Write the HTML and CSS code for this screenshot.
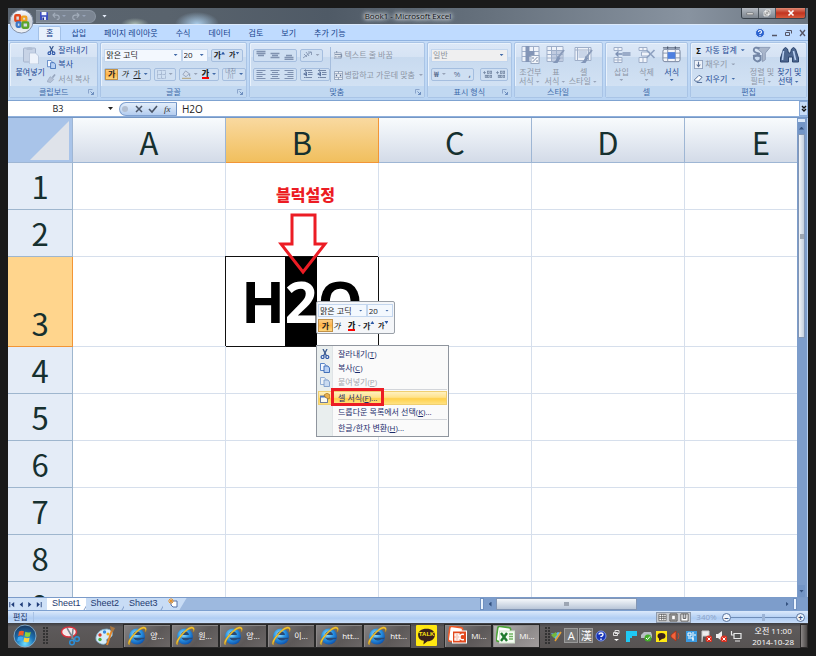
FILE: index.html
```html
<!DOCTYPE html>
<html lang="ko">
<head>
<meta charset="utf-8">
<meta name="viewport" content="width=device-width, initial-scale=1">
<title>Book1 - Microsoft Excel</title>
<link rel="stylesheet" href="styles.css">
</head>
<body>
<svg class="defs" aria-hidden="true">
  <defs>
    <linearGradient id="gOrb" x1="0" y1="0" x2="0" y2="1"><stop offset="0" stop-color="#fdfdff"/><stop offset=".5" stop-color="#c9cfda"/><stop offset="1" stop-color="#f3f6fb"/></linearGradient>
    <radialGradient id="gStart" cx=".5" cy=".85" r=".8"><stop offset="0" stop-color="#6fe0ff"/><stop offset=".5" stop-color="#1d75b8"/><stop offset="1" stop-color="#1a3b63"/></radialGradient>
    <radialGradient id="gIe" cx=".4" cy=".35" r=".7"><stop offset="0" stop-color="#9be2ff"/><stop offset=".5" stop-color="#2b95e4"/><stop offset="1" stop-color="#0a4eaa"/></radialGradient>
  </defs>
  <symbol id="i-save" viewBox="0 0 10 10"><path d="M0 0h9l1 1v9H0z" fill="#3c4ec0"/><path d="M2 0h6v4H2z" fill="#f4f6ff"/><path d="M2.500 6h5v4h-5z" fill="#dfe4f8"/><path d="M3 7h2v3H3z" fill="#26308a"/></symbol>
  <symbol id="i-undo" viewBox="0 0 10 10"><path d="M1 4h5q3 0 3 3T6 9M1 4l3-3M1 4l3 3" fill="none" stroke="#a3adbb" stroke-width="1.500"/></symbol>
  <symbol id="i-redo" viewBox="0 0 10 10"><path d="M9 4H4Q1 4 1 7t3 2M9 4L6 1M9 4L6 7" fill="none" stroke="#a3adbb" stroke-width="1.500"/></symbol>
  <symbol id="i-office" viewBox="0 0 26 26"><circle cx="13" cy="13" r="12" fill="url(#gOrb)" stroke="#7f8ea6"/><g fill="none" stroke-width="2.400"><rect x="6.500" y="6.500" width="5" height="6" rx="1" stroke="#e0481c"/><rect x="13.500" y="8" width="4.500" height="4.500" rx="1" stroke="#f0a020"/><rect x="8" y="14" width="4" height="4.500" rx="1" stroke="#3c78c8"/><rect x="14" y="14" width="6" height="5.500" rx="1" stroke="#5ba52c"/></g></symbol>
  <symbol id="i-paste" viewBox="0 0 16 18"><rect x="1" y="2" width="12" height="14" rx="1" fill="#c7d3e6" stroke="#a5b4cc"/><path d="M4 3q0-2 3-2t3 2v1H4z" fill="#b1bfd4"/><path d="M7 7h6l3 3v8H7z" fill="#eef3fb" stroke="#b3c1d8" stroke-width=".8"/></symbol>
  <symbol id="i-cut" viewBox="0 0 10 10"><path d="M3 0l3.500 7M7 0L3.500 7" stroke="#39598f" stroke-width="1.300"/><circle cx="2.600" cy="8" r="1.500" fill="none" stroke="#2c56a8" stroke-width="1.200"/><circle cx="7.300" cy="8" r="1.500" fill="none" stroke="#2c56a8" stroke-width="1.200"/></symbol>
  <symbol id="i-copy" viewBox="0 0 10 10"><path d="M.5.500h4l1.500 2v5H.5z" fill="#f2f7ff" stroke="#4a78bf" stroke-width=".9"/><path d="M4 3h4l1.500 2v4.500H4z" fill="#b7d0f4" stroke="#3465b2" stroke-width=".9"/></symbol>
  <symbol id="i-brush" viewBox="0 0 10 10"><path d="M9 .5L6 4" stroke="#96a5bd" stroke-width="1.800"/><path d="M3.500 3l4 3L4 9.500 0 8.500z" fill="#b5c2d6" stroke="#92a2bc" stroke-width=".7"/></symbol>
  <symbol id="i-border" viewBox="0 0 10 10"><path d="M.5.500h9v9h-9zM5 .5v9M.5 5h9" fill="none" stroke="#9aabc7" stroke-dasharray="1 .5"/></symbol>
  <symbol id="i-fill" viewBox="0 0 10 10"><path d="M4 1l4 3-3.500 3.500L1 5z" fill="#d5deeb" stroke="#8493ad" stroke-width=".8"/><path d="M8.500 4v3" stroke="#8493ad"/><path d="M0 8.500h10V10H0z" fill="#b9ad8e"/></symbol>
  <symbol id="i-top" viewBox="0 0 10 10"><path d="M.5 1.500h9M.5 3.500h9M2 5.500h6" stroke="#8092b0" stroke-width="1.500"/></symbol>
  <symbol id="i-mid" viewBox="0 0 10 10"><path d="M.5 3.500h9M2 5.500h6M.5 7.500h9" stroke="#8092b0" stroke-width="1.500"/></symbol>
  <symbol id="i-bot" viewBox="0 0 10 10"><path d="M2 5.500h6M.5 7.500h9M.5 9.500h9" stroke="#8092b0" stroke-width="1.500"/></symbol>
  <symbol id="i-left" viewBox="0 0 10 10"><path d="M.5 1.500h9M.5 3.500h6M.5 5.500h9M.5 7.500h6M.5 9.500h9" stroke="#7e90af"/></symbol>
  <symbol id="i-cen" viewBox="0 0 10 10"><path d="M.5 1.500h9M2 3.500h6M.5 5.500h9M2 7.500h6M.5 9.500h9" stroke="#7e90af"/></symbol>
  <symbol id="i-right" viewBox="0 0 10 10"><path d="M.5 1.500h9M3.500 3.500h6M.5 5.500h9M3.500 7.500h6M.5 9.500h9" stroke="#7e90af"/></symbol>
  <symbol id="i-ind" viewBox="0 0 10 10"><path d="M1 1.500h8M5 3.500h4.500M5 5.500h4.500M1 8.500h8" stroke="#7487a8"/><path d="M4 2.500v5L0 5z" fill="#5f76a0"/><path d="M2.500 0v10" stroke="#93a5c2" stroke-dasharray="1 1"/></symbol>
  <symbol id="i-ori" viewBox="0 0 10 10"><path d="M0 8l8-6M5 2h3.500v3M1 4l3 3M3 2l3 4" fill="none" stroke="#8b9cb8"/></symbol>
  <symbol id="i-wrap" viewBox="0 0 10 10"><path d="M0 2h8v6H0z" fill="#edf1f7" stroke="#8899b4" stroke-width=".9"/><path d="M1 4h7.500v2.500H4M1 6.500h2M3 0v2" fill="none" stroke="#71839f"/></symbol>
  <symbol id="i-merge" viewBox="0 0 10 10"><path d="M.5.500h9v9h-9zM.5 3h9M.5 7h9M5 0v3M5 7v3" fill="#edf1f7" stroke="#8899b4" stroke-width=".9"/><path d="M2 5h1.500M6.500 5H8" stroke="#4d648d" stroke-width="1.400"/></symbol>
  <symbol id="i-dec" viewBox="0 0 12 10"><path d="M0 2.500h4M2 .5v4" stroke="#70839f"/><g fill="none" stroke="#70839f"><rect x="6" y=".5" width="2" height="3"/><rect x="9.500" y=".5" width="2" height="3"/><rect x="3" y="6" width="2" height="3"/><rect x="6" y="6" width="2" height="3"/><rect x="9.500" y="6" width="2" height="3"/></g></symbol>
  <symbol id="i-cond" viewBox="0 0 18 18"><path d="M.5.500h17v15H.5zM.5 5.500h17M.5 10.500h17M12 .5v15" fill="#eff3fa" stroke="#9fafc9"/><path d="M4 0h4v16H4zM8 5h5v5H8z" fill="#8395b6"/><rect x="9.500" y="9.500" width="8" height="8" fill="#f5f7fb" stroke="#97a7c0"/><path d="M11 16l5-5M11.500 11v2M15.500 14v2" stroke="#7788a6"/></symbol>
  <symbol id="i-table" viewBox="0 0 18 18"><path d="M.5.500h16v15H.5zM.5 4.500h16M.5 8.500h16M.5 12h16M5 .5v15M10 .5v15" fill="#eff3fa" stroke="#9fafc9"/><path d="M5 5h11v10H5z" fill="#a2b3d0" opacity=".6"/><path d="M17.500 4L12 11" stroke="#8b9cba" stroke-width="2"/><path d="M11 10l3 2-3 5H6q4-2 5-7z" fill="#8296b8"/></symbol>
  <symbol id="i-style" viewBox="0 0 18 18"><path d="M.5 1.500h16v13H.5zM.5 4h16M3 1.500v13M14 1.500v13" fill="#eff3fa" stroke="#9fafc9"/><path d="M4 5h9v7H4z" fill="#c9d5e8"/><path d="M17.500 4L12 11" stroke="#8b9cba" stroke-width="2"/><path d="M11 10l3 2-3 5H6q4-2 5-7z" fill="#8296b8"/></symbol>
  <symbol id="i-ins" viewBox="0 0 18 18"><path d="M1.500 1.500h8v3h-8zM5.500 1.500v3M1.500 11.500h8v5h-8zM5.500 11.500v5M1.500 14h8" fill="#f1f4fa" stroke="#9fafc9"/><path d="M10 6h8v4h-8z" fill="#9aabc8"/><path d="M10 8H4M6 5.500L3.500 8 6 10.500" fill="none" stroke="#7b8fb2" stroke-width="1.300"/></symbol>
  <symbol id="i-del" viewBox="0 0 18 18"><path d="M1.500 1.500h8v3h-8zM5.500 1.500v3M4 6h8v4H4zM1.500 11.500h8v5h-8zM5.500 11.500v5" fill="#f1f4fa" stroke="#9fafc9"/><path d="M9 4l8 8M17 4l-8 8" stroke="#8fa2c1" stroke-width="1.700"/></symbol>
  <symbol id="i-fmt" viewBox="0 0 20 18"><path d="M1 1.500h18M6 0v3M14 0v3" stroke="#3c4a63"/><rect x="1" y="3" width="18" height="13" rx="2" fill="#f4f6fa" stroke="#72819b"/><path d="M1 7h18M1 12h18M6 3v13M14 3v13" stroke="#8b98ae"/><rect x="6" y="6" width="8" height="7" fill="#4e80e0"/></symbol>
  <symbol id="i-down" viewBox="0 0 10 10"><rect x=".5" y=".5" width="9" height="9" fill="#eef2f9" stroke="#8fa0bd"/><path d="M5 2v5M3 5l2 2.500L7 5" fill="none" stroke="#5f7397" stroke-width="1.200"/></symbol>
  <symbol id="i-erase" viewBox="0 0 10 10"><path d="M5.500 1.500L9 3.500 5 8H1.500L.5 6.500z" fill="#fff" stroke="#43618f"/><path d="M3 9.500h6" stroke="#43618f"/></symbol>
  <symbol id="i-sort" viewBox="0 0 20 18"><path d="M4 1h15l-5 6v7l-3 2V7z" fill="#a9b6cb" stroke="#8c9bb5"/><path d="M8 2q-5-2-6 1t4 4-5 3M8 10q-7-1-6 3 3 5 7 1v-4z" fill="none" stroke="#7386a6" stroke-width="2"/></symbol>
  <symbol id="i-find" viewBox="0 0 18 18"><path d="M3 3q2-3 4 0l1 4h2l1-4q2-3 4 0l3 9v4h-6v-5h-4v5H0v-4z" fill="#4c668f" stroke="#2c456e"/><path d="M3 5l-1 9M13 5l2 9" stroke="#b9cff0" stroke-width="1.600"/></symbol>
  <symbol id="i-help" viewBox="0 0 10 10"><circle cx="5" cy="5" r="4.500" fill="#2b63d0" stroke="#c6dcfa"/><path d="M3.500 4q0-1.500 1.500-1.500T6.500 4Q6.500 5 5 5.500V6M5 7v1" fill="none" stroke="#fff" stroke-width="1.100"/></symbol>
  <symbol id="i-launch" viewBox="0 0 6 6"><path d="M.5 4.500v-4h4" fill="none" stroke="#8ba5cc"/><path d="M2.500 2.500l3 3M5.500 3v2.500H3" fill="none" stroke="#6d8ebf"/></symbol>
  <symbol id="i-prop" viewBox="0 0 10 10"><rect x=".5" y="3" width="7" height="6.500" fill="#fdfbf0" stroke="#5f719a" stroke-width=".9"/><path d="M0 3h8v1.500H0z" fill="#4e79c3"/><path d="M4 2l3-2 3 2v3L8 6 5 4z" fill="#eab04c" stroke="#8a6220" stroke-width=".6"/></symbol>
  <symbol id="i-ie" viewBox="0 0 20 20"><circle cx="10" cy="10.500" r="8" fill="url(#gIe)"/><path d="M6 9q.5-3.500 4-3.500T14 9zM6 11.700h12q-1 2-3.500 1.600-5 3-8.500-1.600z" fill="#274a78"/><path d="M2.500 19q-4-2 4-11T18 1q2.500 1 .5 5 .5-3-1.500-3.500-4 0-9.500 6.500T2.500 19z" fill="#f6c832" stroke="#c98f10" stroke-width=".4"/></symbol>
  <symbol id="i-start" viewBox="0 0 24 24"><circle cx="12" cy="12" r="11" fill="url(#gStart)" stroke="#8db9d8" stroke-width=".8"/><path d="M6 7.500q3-1.500 5-.2l-.8 4.500q-2.400-1-5 .2z" fill="#f05a28"/><path d="M12.300 7.700q2.500 1.300 5.500.2l-1 4.600q-2.700 1-5.200-.3z" fill="#8fd03c"/><path d="M5 13.200q2.500-1.300 5-.1L9.200 17q-2.200-1-5 .2z" fill="#3fa9f5"/><path d="M11.300 13.500q2.500 1.200 5.300.2l-1 4.200q-2.600.8-5.100-.4z" fill="#ffd23c"/></symbol>
  <symbol id="i-snip" viewBox="0 0 20 20"><ellipse cx="8" cy="6" rx="7.500" ry="5" fill="#f5e9ea" stroke="#d8323e" stroke-width="1.500"/><path d="M6 2l7 12M12 3l-1 10" stroke="#7d8791" stroke-width="1.500"/><circle cx="11" cy="16.500" r="2.300" fill="none" stroke="#2c8fd8" stroke-width="1.500"/><circle cx="16" cy="13" r="2.300" fill="none" stroke="#2c8fd8" stroke-width="1.500"/></symbol>
  <symbol id="i-paint" viewBox="0 0 20 20"><path d="M1 11q2-8 11-8 7 1 5 7-2 3-5 3-1 1 0 3-2 4-8 1-4-2-3-6z" fill="#d8ecf8" stroke="#7fb1cf" stroke-width=".8"/><circle cx="5" cy="9" r="1.700" fill="#d83a2c"/><circle cx="9.500" cy="6" r="1.700" fill="#3a8be0"/><circle cx="5" cy="13.500" r="1.700" fill="#4caf3e"/><circle cx="13" cy="8" r="1.500" fill="#f2b01e"/><path d="M17 4l-5 15" stroke="#e0832a" stroke-width="2"/><path d="M15 0l5 2-2 4-2-1z" fill="#a87742"/></symbol>
  <symbol id="i-ppt" viewBox="0 0 20 20"><rect x="1" y="1" width="13" height="15" rx="2" fill="#fff" stroke="#f05a28" stroke-width="1.600" transform="rotate(8 8 8)"/><rect x="4.500" y="5" width="14" height="12" fill="#e2481c" stroke="#fff"/><path d="M7 8h4v2H7zM7 12h4v2H7zM16 8.500q-4-1-4 2.500t4 2.500" fill="none" stroke="#fff" stroke-width="1.400"/></symbol>
  <symbol id="i-xls" viewBox="0 0 20 20"><rect x="1" y="1" width="13" height="15" rx="2" fill="#fff" stroke="#4ea63a" stroke-width="1.600" transform="rotate(8 8 8)"/><rect x="3.500" y="5" width="15" height="12" fill="#f4fbf2" stroke="#d3e6cf"/><path d="M5 7l6 8M11 7l-6 8" stroke="#1f7a2e" stroke-width="2.400"/><path d="M13 8h4M13 10.500h4M13 13h4" stroke="#6fb562" stroke-width="1.300"/></symbol>
  <symbol id="i-talk" viewBox="0 0 20 20"><rect width="20" height="20" rx="1" fill="#ffe812"/><path d="M10 3.500c5 0 8 2.500 8 6s-3 6-7 6l-4 3 .5-3.400C4 14.500 2 12.500 2 9.500c0-3.500 3-6 8-6z" fill="#38201c"/></symbol>
</svg>

<div class="window">
  <header class="titlebar">
    <button class="orb" aria-label="Office 단추"><svg><use href="#i-office"/></svg></button>
    <div class="quick">
      <button aria-label="저장"><svg><use href="#i-save"/></svg></button>
      <button aria-label="실행 취소"><svg><use href="#i-undo"/></svg><i class="dd light"></i></button>
      <button aria-label="다시 실행"><svg><use href="#i-redo"/></svg><i class="dd light"></i></button>
    </div>
    <i class="dd white"></i>
    <h1>Book1 - Microsoft Excel</h1>
    <div class="winbtns">
      <button aria-label="최소화"><svg viewBox="0 0 12 10"><path d="M2 5h8v2H2z" fill="#fff" stroke="#444" stroke-width=".6"/></svg></button>
      <button aria-label="최대화"><svg viewBox="0 0 12 10"><path d="M4.500 1.500h5v5h-5zM2.500 3.500h5v5h-5z" fill="#777" stroke="#fff"/></svg></button>
      <button class="close" aria-label="닫기"><svg viewBox="0 0 12 10"><path d="M3 2l6 6M9 2L3 8" stroke="#fff" stroke-width="2"/></svg></button>
    </div>
  </header>

  <nav class="tabs">
    <a class="on" href="#home">홈</a><a href="#insert">삽입</a><a href="#layout">페이지 레이아웃</a><a href="#formula">수식</a><a href="#data">데이터</a><a href="#review">검토</a><a href="#view">보기</a><a href="#addin">추가 기능</a>
    <div class="docbtns">
      <button aria-label="도움말"><svg><use href="#i-help"/></svg></button>
      <button aria-label="문서 최소화"><svg viewBox="0 0 10 10"><path d="M3 7.500h5" stroke="#556" stroke-width="1.500"/></svg></button>
      <button aria-label="문서 복원"><svg viewBox="0 0 10 10"><path d="M3.500 2.500h5v3M2.500 4.500h4v3h-4z" fill="none" stroke="#556"/></svg></button>
      <button aria-label="문서 닫기"><svg viewBox="0 0 10 10"><path d="M3 2l5 6M8 2L3 8" stroke="#556" stroke-width="1.300"/></svg></button>
    </div>
  </nav>

  <div class="ribbon">
    <section class="group clip">
      <div class="body">
        <button class="big"><svg><use href="#i-paste"/></svg><span>붙여넣기</span><i class="dd"></i></button>
        <div class="list">
          <button><svg><use href="#i-cut"/></svg>잘라내기</button>
          <button><svg><use href="#i-copy"/></svg>복사</button>
          <button class="off"><svg><use href="#i-brush"/></svg>서식 복사</button>
        </div>
      </div>
      <h2>클립보드<svg><use href="#i-launch"/></svg></h2>
    </section>
    <section class="group font">
      <div class="body rows">
        <div class="row">
          <span class="combo face"><select aria-label="글꼴"><option>맑은 고딕</option></select><i class="dd"></i></span>
          <span class="combo size"><select aria-label="글꼴 크기"><option>20</option></select><i class="dd"></i></span>
          <span class="set end"><button class="ga">가<i class="tip grow"></i></button><button class="ga small">가<i class="tip"></i></button></span>
        </div>
        <div class="row">
          <span class="set"><button class="ga hot">가</button><button class="ga it">가</button><button class="ga un">가<i class="dd"></i></button></span>
          <span class="set"><button class="off"><svg><use href="#i-border"/></svg><i class="dd"></i></button></span>
          <span class="set"><button class="off"><svg><use href="#i-fill"/></svg><i class="dd"></i></button><button class="ga"><b class="red">가</b><i class="dd"></i></button></span>
          <span class="set end"><button class="ruby"><span>내천<br>川</span><i class="dd"></i></button></span>
        </div>
      </div>
      <h2>글꼴<svg><use href="#i-launch"/></svg></h2>
    </section>
    <section class="group align">
      <div class="body">
        <div class="rows">
          <div class="row">
            <span class="set"><button aria-label="위쪽 맞춤"><svg><use href="#i-top"/></svg></button><button aria-label="가운데 맞춤"><svg><use href="#i-mid"/></svg></button><button aria-label="아래쪽 맞춤"><svg><use href="#i-bot"/></svg></button></span>
            <span class="set"><button class="off" aria-label="방향"><svg><use href="#i-ori"/></svg><i class="dd"></i></button></span>
          </div>
          <div class="row">
            <span class="set"><button aria-label="왼쪽"><svg><use href="#i-left"/></svg></button><button aria-label="가운데"><svg><use href="#i-cen"/></svg></button><button aria-label="오른쪽"><svg><use href="#i-right"/></svg></button></span>
            <span class="set"><button aria-label="내어쓰기"><svg><use href="#i-ind"/></svg></button><button aria-label="들여쓰기"><svg><use href="#i-ind"/></svg></button></span>
          </div>
        </div>
        <div class="list two">
          <button class="off"><svg><use href="#i-wrap"/></svg>텍스트 줄 바꿈</button>
          <button class="off"><svg><use href="#i-merge"/></svg>병합하고 가운데 맞춤<i class="dd"></i></button>
        </div>
      </div>
      <h2>맞춤<svg><use href="#i-launch"/></svg></h2>
    </section>
    <section class="group number">
      <div class="body rows">
        <div class="row"><span class="combo grey"><select aria-label="표시 형식" disabled><option>일반</option></select><i class="dd"></i></span></div>
        <div class="row">
          <span class="set sym"><button><b>₩</b><i class="dd light"></i></button><button>%</button><button><b>,</b></button></span>
          <span class="set end"><button aria-label="자릿수 늘림"><svg><use href="#i-dec"/></svg></button><button aria-label="자릿수 줄임"><svg><use href="#i-dec"/></svg></button></span>
        </div>
      </div>
      <h2>표시 형식<svg><use href="#i-launch"/></svg></h2>
    </section>
    <section class="group styles">
      <div class="body">
        <button class="big off"><svg><use href="#i-cond"/></svg><span>조건부<br>서식<i class="dd"></i></span></button>
        <button class="big off"><svg><use href="#i-table"/></svg><span>표<br>서식<i class="dd"></i></span></button>
        <button class="big off"><svg><use href="#i-style"/></svg><span>셀<br>스타일<i class="dd"></i></span></button>
      </div>
      <h2>스타일</h2>
    </section>
    <section class="group cells">
      <div class="body">
        <button class="big off"><svg><use href="#i-ins"/></svg><span>삽입</span><i class="dd"></i></button>
        <button class="big off"><svg><use href="#i-del"/></svg><span>삭제</span><i class="dd"></i></button>
        <button class="big"><svg><use href="#i-fmt"/></svg><span>서식</span><i class="dd"></i></button>
      </div>
      <h2>셀</h2>
    </section>
    <section class="group edit">
      <div class="body">
        <div class="list">
          <button><b class="sigma">Σ</b>자동 합계<i class="dd"></i></button>
          <button class="off"><svg><use href="#i-down"/></svg>채우기<i class="dd"></i></button>
          <button><svg><use href="#i-erase"/></svg>지우기<i class="dd"></i></button>
        </div>
        <button class="big off"><svg><use href="#i-sort"/></svg><span>정렬 및<br>필터<i class="dd"></i></span></button>
        <button class="big"><svg><use href="#i-find"/></svg><span>찾기 및<br>선택<i class="dd"></i></span></button>
      </div>
      <h2>편집</h2>
    </section>
  </div>

  <div class="formula">
    <input class="name" aria-label="이름 상자" value="B3">
    <i class="dd black"></i>
    <div class="fx">
      <i class="knob"></i>
      <button aria-label="취소"><svg viewBox="0 0 10 10"><path d="M2 2l6 6M8 2L2 8" stroke="#4a5568" stroke-width="1.500"/></svg></button>
      <button aria-label="입력"><svg viewBox="0 0 10 10"><path d="M1 5l3 3 5-6" fill="none" stroke="#4a5568" stroke-width="1.600"/></svg></button>
      <button class="fn">fx</button>
    </div>
    <input class="value" aria-label="수식 입력줄" value="H2O">
    <button class="expand" aria-label="수식 입력줄 확장"><svg viewBox="0 0 8 10"><path d="M2 2l2 2 2-2M2 5l2 2 2-2" fill="none" stroke="#111" stroke-width="1.400"/></svg></button>
  </div>

  <main class="sheet">
    <div class="view">
      <table>
        <colgroup><col class="rh"><col><col><col><col><col></colgroup>
        <thead><tr><th class="corner"><svg viewBox="0 0 64 44"><path d="M61 3v39H22z" fill="#dfe3ea"/></svg></th><th>A</th><th class="sel">B</th><th>C</th><th>D</th><th>E</th></tr></thead>
        <tbody>
          <tr><th>1</th><td></td><td></td><td></td><td></td><td></td></tr>
          <tr><th>2</th><td></td><td></td><td></td><td></td><td></td></tr>
          <tr class="tall"><th class="sel">3</th><td></td><td class="active"><div>H<mark>2</mark>O</div></td><td></td><td></td><td></td></tr>
          <tr><th>4</th><td></td><td></td><td></td><td></td><td></td></tr>
          <tr><th>5</th><td></td><td></td><td></td><td></td><td></td></tr>
          <tr><th>6</th><td></td><td></td><td></td><td></td><td></td></tr>
          <tr><th>7</th><td></td><td></td><td></td><td></td><td></td></tr>
          <tr><th>8</th><td></td><td></td><td></td><td></td><td></td></tr>
          <tr><th>9</th><td></td><td></td><td></td><td></td><td></td></tr>
        </tbody>
      </table>
    </div>
    <div class="vbar"><i class="split"></i><button class="up" aria-label="위로"></button><i class="thumb"></i><button class="down" aria-label="아래로"></button></div>

    <p class="note">블럭설정</p>
    <svg class="arrow" viewBox="0 0 50 62"><path d="M14 2h23v29h10L25 59 3 31h11z" fill="none" stroke="#ec1c24" stroke-width="3"/></svg>

    <div class="mini">
      <div class="row">
        <span class="combo face"><select aria-label="미니 글꼴"><option>맑은 고딕</option></select><i class="dd"></i></span>
        <span class="combo size"><select aria-label="미니 글꼴 크기"><option>20</option></select><i class="dd"></i></span>
      </div>
      <div class="row">
        <button class="ga hot">가</button><button class="ga it">가</button><button class="ga"><b class="red">가</b><i class="dd"></i></button><button class="ga">가<i class="tip grow"></i></button><button class="ga small">가<i class="tip"></i></button>
      </div>
    </div>

    <div class="menu">
      <button><svg><use href="#i-cut"/></svg><span>잘라내기(<u>T</u>)</span></button>
      <button><svg><use href="#i-copy"/></svg><span>복사(<u>C</u>)</span></button>
      <button class="off"><svg><use href="#i-copy"/></svg><span>붙여넣기(<u>P</u>)</span></button>
      <hr>
      <button class="hover"><svg><use href="#i-prop"/></svg><span>셀 서식(<u>F</u>)...</span></button>
      <button><svg></svg><span>드롭다운 목록에서 선택(<u>K</u>)...</span></button>
      <hr>
      <button><svg></svg><span>한글/한자 변환(<u>H</u>)...</span></button>
      <i class="frame"></i>
    </div>
  </main>

  <div class="sheettabs">
    <div class="nav">
      <button aria-label="처음"><svg viewBox="0 0 8 8"><path d="M1 1h1v6H1zM6.500 1v6L3 4z"/></svg></button>
      <button aria-label="이전"><svg viewBox="0 0 8 8"><path d="M6 1v6L2.500 4z"/></svg></button>
      <button aria-label="다음"><svg viewBox="0 0 8 8"><path d="M2 1v6l3.500-3z"/></svg></button>
      <button aria-label="마지막"><svg viewBox="0 0 8 8"><path d="M6 1h1v6H6zM1.500 1v6L5 4z"/></svg></button>
    </div>
    <a class="on" href="#s1">Sheet1</a><a href="#s2">Sheet2</a><a href="#s3">Sheet3</a><a class="new" href="#new" aria-label="워크시트 삽입"><svg viewBox="0 0 10 10"><path d="M3 3h6v6H5L3 7z" fill="#fff" stroke="#5571a5"/><path d="M3 0v6M0 3h6M1 1l4 4M5 1L1 5" stroke="#e8942c"/></svg></a>
    <div class="hbar"><i class="split"></i><button class="lt" aria-label="왼쪽으로"></button><i class="thumb"></i><i class="track"></i><button class="rt" aria-label="오른쪽으로"></button><i class="split"></i></div>
  </div>

  <footer class="status">
    <span class="mode">편집</span>
    <div class="views">
      <button aria-label="기본"><svg viewBox="0 0 10 10"><path d="M1 1.500h8v7H1zM1 4h8M1 6h8M4 1v7M6.500 1v7" fill="#fff" stroke="#555" stroke-width=".8"/></svg></button>
      <button aria-label="페이지 레이아웃 보기"><svg viewBox="0 0 10 10"><path d="M1 1h8v8H1z" fill="#aaa" stroke="#555"/><path d="M3 2.500h4v5H3z" fill="#fff" stroke="#555" stroke-width=".7"/></svg></button>
      <button aria-label="페이지 나누기 미리 보기"><svg viewBox="0 0 10 10"><path d="M1 1h8v8H1zM3.500 1v5h3V1" fill="#fff" stroke="#555"/></svg></button>
    </div>
    <span class="pct">340%</span>
    <button class="round" aria-label="축소">−</button>
    <input type="range" aria-label="확대/축소" min="0" max="100" value="50">
    <button class="round" aria-label="확대">+</button>
  </footer>
</div>

<div class="taskbar">
  <button class="start" aria-label="시작"><svg><use href="#i-start"/></svg></button>
  <i class="grip"></i>
  <button class="pin" aria-label="캡처 도구"><svg><use href="#i-snip"/></svg></button>
  <button class="pin" aria-label="그림판"><svg><use href="#i-paint"/></svg></button>
  <div class="tasks">
    <button><svg><use href="#i-ie"/></svg>양...</button>
    <button><svg><use href="#i-ie"/></svg>원...</button>
    <button><svg><use href="#i-ie"/></svg>양...</button>
    <button><svg><use href="#i-ie"/></svg>이...</button>
    <button><svg><use href="#i-ie"/></svg>htt...</button>
    <button><svg><use href="#i-ie"/></svg>htt...</button>
  </div>
  <button class="talk" aria-label="카카오톡"><svg><use href="#i-talk"/></svg><span>TALK</span></button>
  <div class="tasks"><button><svg><use href="#i-ppt"/></svg>Mi...</button></div>
  <div class="tasks last"><button class="now"><svg><use href="#i-xls"/></svg>Mi...</button></div>
  <i class="grip"></i>
  <div class="tray">
    <svg viewBox="0 0 12 12"><path d="M1 3l5 7 5-7-3-1-3 2z" fill="#5fb8e8"/><path d="M1 5l5-3 1 3-3 3z" fill="#74b83c"/><path d="M5 11l6-9" stroke="#e8a030" stroke-width="1.500"/></svg>
    <span class="ime">A</span><span class="ime">漢</span>
    <svg viewBox="0 0 12 12"><circle cx="6" cy="6" r="5" fill="#1734b8" stroke="#7d96e8"/><path d="M4 4.500Q4 3 6 3t2 1.700Q8 6 6 6.500V7M6 8.500V10" fill="none" stroke="#fff" stroke-width="1.300"/></svg>
    <svg viewBox="0 0 12 12"><path d="M5 .5h4v3H5zM3.500 2.500h4v3h-4z" fill="none" stroke="#ddd"/><path d="M4 9h5L6.500 11z" fill="#fff"/></svg>
    <svg viewBox="0 0 12 12"><path d="M1 1h11v5H7v2H5v4H1z" fill="#1fc8f4"/></svg>
    <svg viewBox="0 0 12 12"><path d="M1 5l3-3h7l1 3v3H1z" fill="#b8bdc4"/><circle cx="8" cy="8" r="3.500" fill="#43b02a"/><path d="M6 8l1.500 1.500L10 6.500" fill="none" stroke="#fff"/></svg>
    <svg viewBox="0 0 12 12"><path d="M1 1h11v11H1z" fill="#ffe812"/><ellipse cx="6.500" cy="6" rx="4" ry="3" fill="#38201c"/><path d="M4 7l0 4 3-2z" fill="#38201c"/></svg>
    <svg viewBox="0 0 12 12"><path d="M1 5l5-4v10L1 7z" fill="#f2643c" stroke="#a82d14" stroke-width=".8"/><path d="M8 3q2 3 0 6" fill="none" stroke="#c94a2c"/></svg>
    <svg viewBox="0 0 12 12"><path d="M1 1h11v11H1z" fill="#3a9ae0"/><path d="M3 3h3v3H3zM8 2v8M9 5h2M3 8h5v3" fill="none" stroke="#fff"/></svg>
    <svg viewBox="0 0 12 12"><path d="M2 12V1h7v5H3" fill="#eee" stroke="#ccc"/><circle cx="9" cy="9" r="3.500" fill="#dc3020"/><path d="M7.500 7.500l3 3M10.500 7.500l-3 3" stroke="#fff"/></svg>
    <svg viewBox="0 0 12 12"><path d="M1 4h2l4-3v10L3 8H1z" fill="#eee"/><circle cx="9" cy="9" r="3.500" fill="#dc3020"/><path d="M7.500 7.500l3 3M10.500 7.500l-3 3" stroke="#fff"/></svg>
    <svg viewBox="0 0 12 12"><path d="M4 3.500h7v5H4zM5 11h5M1.500 1v4h2" fill="#555" stroke="#e6e6e6" stroke-width="1.200"/></svg>
  </div>
  <div class="clock">오전 11:00<br>2014-10-28</div>
  <i class="peek"></i>
</div>
</body>
</html>
```

FILE: styles.css
```css
* { box-sizing: border-box; margin: 0; padding: 0; }
body {
  min-height: 100vh;
  padding: 8px;
  background: #1a1a1a;
  display: flex;
  flex-direction: column;
  font: 8px/10px "Open Sans", "Noto Sans CJK KR", sans-serif;
  color: #1e4a94;
}
button, input, select { font: inherit; color: inherit; border: 0; background: none; appearance: none; }
button { display: flex; align-items: center; white-space: nowrap; }
a { color: inherit; text-decoration: none; }
svg { display: block; flex: none; width: 10px; height: 10px; }
.defs { position: absolute; width: 0; height: 0; }
.window { flex: 1; display: flex; flex-direction: column; min-height: 0; }

.dd { flex: none; width: 4px; height: 2px; margin: 0 2px; background: #416aa8; clip-path: polygon(0 0, 100% 0, 50% 100%); }
.dd.light, .off .dd { background: #97a3b8; }
.dd.white { background: #e6eefa; width: 5px; height: 3px; margin: 0 6px; }
.dd.black { background: #222; width: 5px; height: 3px; margin: 0 6px 0 0; }

/* title bar */
.titlebar {
  position: relative;
  height: 16px;
  display: flex;
  align-items: center;
  background:
    radial-gradient(ellipse 22px 12px at 189px 16px, #a9cbe8, transparent),
    radial-gradient(ellipse 14px 6px at 127px 16px, #a9b8b0, transparent),
    linear-gradient(90deg, #5a646f 0, #59636d 20%, #4f5a66 40%, #66717d 60%, #8893a0 85%, #6a7480 100%);
}
.orb { position: absolute; left: 1px; top: 1px; z-index: 2; }
.orb svg { width: 25px; height: 25px; }
.quick { margin-left: 28px; width: 60px; height: 13px; display: flex; align-items: center; gap: 4px; padding-left: 4px; border: 1px solid #8c96a3; border-left: 0; border-radius: 0 7px 7px 0; background: #7b8592; }
.quick svg { width: 8px; height: 8px; }
.titlebar h1 { position: absolute; inset: 0; text-align: center; font: 8px/16px "Open Sans", sans-serif; color: #111; text-shadow: 0 0 3px #dfe5ea, 0 0 4px #dfe5ea, 0 0 5px #dfe5ea, 0 0 6px #dfe5ea; }
.winbtns { margin: 0 2px 5px auto; position: relative; z-index: 1; display: flex; border: 1px solid #39414b; border-top: 0; border-radius: 0 0 3px 3px; overflow: hidden; }
.winbtns button { width: 17px; height: 10px; justify-content: center; background: linear-gradient(#b4bac2, #7d858f); border-right: 1px solid #4d565f; }
.winbtns .close { width: 29px; border: 0; background: linear-gradient(#e08a74, #c23420 50%, #d65a3c); }

/* ribbon tabs */
.tabs { height: 16px; display: flex; align-items: end; padding-left: 30px; background: #bfdbff; border-top: 1px solid #dbe9fb; }
.tabs a { height: 14px; line-height: 14px; padding: 0 9px; color: #15428b; }
.tabs a.on { padding: 0 7px; margin-right: 1px; background: #e8f1fc; border: 1px solid #a3c1e8; border-bottom: 0; border-radius: 2px 2px 0 0; line-height: 12px; }
.docbtns { margin-left: auto; display: flex; gap: 4px; align-self: center; padding-right: 1px; }

/* ribbon */
.ribbon { height: 61px; display: flex; gap: 2px; padding: 1px 1px 2px; background: linear-gradient(#c5dcf7, #b9d4f3); border-top: 1px solid #8fb2e0; border-bottom: 1px solid #7fa3d1; }
.group { min-width: 0; display: flex; flex-direction: column; border: 1px solid #a9c4e6; border-radius: 2px; background: linear-gradient(#dce8f7 0, #d6e3f4 25%, #c8daef 26%, #d5e4f5 100%); box-shadow: inset 1px 1px #e9f2fc; overflow: hidden; }
.group h2 { position: relative; flex: none; height: 11px; font-weight: 400; font-size: 8px; line-height: 11px; text-align: center; background: #c1d8f1; color: #3e6aaa; }
.group h2 svg { position: absolute; right: 3px; top: 3px; width: 6px; height: 6px; }
.clip { flex: 89 0 0; } .font { flex: 147 0 0; } .align { flex: 178 0 0; } .number { flex: 84 0 0; }
.styles { flex: 89 0 0; } .cells { flex: 83 0 0; } .edit { flex: 117 0 0; }
.body { flex: 1; display: flex; padding: 0 3px; min-width: 0; min-height: 0; }
.off { color: #8d96a6; }
.big { flex: 1; flex-direction: column; padding-top: 3px; line-height: 9px; text-align: center; }
.big svg { width: 19px; height: 18px; margin-bottom: 3px; }
.big > .dd { margin-top: 3px; }
.big span .dd { display: inline-block; vertical-align: middle; }
.list { display: flex; flex-direction: column; justify-content: space-around; }
.list button { gap: 2px; }
.list svg, .sigma { width: 9px; height: 9px; }
.sigma { color: #111; }
.clip .list { width: 47px; }
.edit .list { width: 54px; }
.two { padding-left: 3px; margin: 4px 0; padding-top: 3px; padding-bottom: 2px; border-left: 1px solid #a5bddd; justify-content: space-between; }
.rows { display: flex; flex-direction: column; justify-content: center; gap: 6px; }
.align .rows { width: 77px; }
.row { display: flex; gap: 3px; align-items: center; }
.end { margin-left: auto; }
.set { display: flex; height: 13px; border: 1px solid #a5bedf; border-radius: 2px; background: #cfdff2; }
.set button { padding: 0 2px; justify-content: center; }
.set .dd { margin: 0 0 0 3px; }
.font .set svg, .number .set svg { width: 9px; height: 9px; }
.combo { position: relative; display: flex; align-items: center; height: 13px; background: #f3f8fe; border: 1px solid #c3d6ee; color: #222; }
.combo select { width: 100%; height: 11px; padding-left: 1px; }
.combo .dd { position: absolute; right: 1px; }
.face { width: 80px; } .size { width: 27px; margin-left: -3px; }
.combo.grey { width: 100%; background: #efeff0; color: #8a8f98; }
.combo.grey select { opacity: 1; }
.ga { color: #222; font-weight: 700; min-width: 13px; }
.tip { width: 4px; height: 3px; margin: 2px 0 0; align-self: flex-start; background: #2b58a5; clip-path: polygon(0 0, 100% 0, 50% 100%); }
.tip.grow { clip-path: polygon(50% 0, 100% 100%, 0 100%); }
.ga.small { font-size: 7px; }
.ga.it { font-style: italic; font-weight: 400; }
.ga.un { text-decoration: underline; font-weight: 400; }
.ga.hot { justify-content: center; background: linear-gradient(#fbd08c, #ffb347 50%, #ffdf8a); box-shadow: inset 0 0 0 1px #c29248; }
.red { line-height: 8px; border-bottom: 2px solid #f00; }
.ruby { font-size: 6px; line-height: 5px; color: #7f8fa9; }
.sym { gap: 4px; color: #5c6f92; }

/* formula bar */
.formula { height: 16px; display: flex; align-items: center; background: #fff; border-bottom: 1px solid #8fb0dc; flex: none; }
.name { width: 100px; text-align: center; color: #222; font-size: 9px; }
.fx { width: 58px; height: 14px; display: flex; align-items: center; gap: 4px; padding-left: 2px; border: 1px solid #7fa0d0; border-right: 1px solid #6f92c4; border-radius: 7px 0 0 7px; background: linear-gradient(#e3eefb, #b4cdef); }
.knob { width: 6px; height: 6px; border-radius: 50%; background: #b2bfd2; margin-right: 2px; }
.fn { font: italic 9px "Liberation Serif", serif; color: #333; padding-left: 2px; }
.value { flex: 1; min-width: 0; padding-left: 5px; font-size: 10px; color: #222; }
.expand { width: 9px; height: 15px; justify-content: center; background: #c7dcf6; border: 1px solid #89aad8; }

/* worksheet */
.sheet { position: relative; flex: 1 1 0; min-height: 0; display: flex; overflow: hidden; border-top: 1px solid #7597c5; }
.view { flex: 1; min-width: 0; overflow: hidden; background: #fff; }
table { width: 830px; table-layout: fixed; border-collapse: separate; border-spacing: 0; }
col { width: 153px; }
col.rh { width: 65px; }
th, td { height: 47px; border-right: 1px solid #d6dfec; border-bottom: 1px solid #d6dfec; }
th { font: 400 31px/40px "Noto Sans CJK KR", sans-serif; color: #16302f; vertical-align: bottom; }
thead th { height: 45px; background: linear-gradient(#f8fbfd, #d3dbe8); border-color: #9eb6d4; }
tbody th { background: #e4ecf7; border-color: #9eb6ce; padding-bottom: 3px; }
thead .corner { background: #a9c4e9; }
.corner svg { width: 64px; height: 44px; }
thead .sel { background: linear-gradient(#f9d9a0, #f1bf5d); border-color: #f29536; }
tbody .sel { background: #ffd58d; border-color: #f29536; }
.tall > * { height: 90px; }
.active { box-shadow: -1px -1px #111; border-color: #111; }
.active div { height: 89px; font: 700 57px/88px "Open Sans", sans-serif; color: #000; text-align: center; overflow: hidden; }
mark { display: inline-block; height: 89px; background: #000; color: #fff; vertical-align: top; }

.vbar { width: 11px; display: flex; flex-direction: column; padding: 1px 2px 0 1px; background: #7d9dcb; border-right: 1px solid #b8d0f0; }
.vbar .split { height: 3px; background: #dceafa; }
.vbar button { height: 12px; width: 100%; background: #7395c6; flex: none; }
.vbar button::after, .hbar button::after { content: ""; width: 5px; height: 3px; margin: auto; background: #33517f; }
.hbar button::after { width: 3px; height: 5px; }
.up::after { clip-path: polygon(50% 0, 100% 100%, 0 100%); }
.down::after { clip-path: polygon(0 0, 100% 0, 50% 100%); }
.vbar .thumb { height: 204px; margin-bottom: auto; border: 1px solid #8296b5; background: linear-gradient(#9da6b3, #9da6b3) center / 4px 5px no-repeat, linear-gradient(90deg, #f2f5f9, #c3cfdf); }

/* annotation and floating menus over the cells */
.note { position: absolute; left: 268px; top: 65px; font: 900 16px/22px "Noto Sans CJK KR", sans-serif; color: #ec1c24; }
.arrow { position: absolute; left: 270px; top: 95px; width: 50px; height: 62px; }
.mini { position: absolute; left: 308px; top: 183px; width: 79px; height: 33px; padding: 2px 1px; display: flex; flex-direction: column; gap: 2px; background: #f4f6f9; border: 1px solid #9aa0a8; border-radius: 2px; }
.mini .row { gap: 0; height: 14px; }
.mini .face { width: 50px; } .mini .size { width: 27px; margin: 0; }
.mini .ga { flex: 1; height: 13px; }
.menu { position: absolute; left: 308px; top: 227px; width: 133px; padding: 1px; border: 1px solid #8f959e; background: linear-gradient(90deg, #e9eeee 15px, #c5cdd2 15px, #fafafa 16px); color: #1b2c6b; }
.menu button { width: 100%; height: 14px; gap: 8px; padding-left: 2px; }
.menu svg { width: 10px; height: 10px; }
.menu .off { color: #a5a9b1; }
.menu .off svg { opacity: .6; }
.menu hr { border: 0; border-top: 1px solid #d2d5da; margin: 0 0 1px 20px; }
.menu .hover { background: linear-gradient(#fff3c8, #ffe28a 45%, #ffd04a 55%, #ffe58c); box-shadow: inset 0 0 0 1px #f0cf70; }
.frame { position: absolute; left: 14px; top: 42px; width: 53px; height: 18px; border: 3px solid #ec1c24; }

/* sheet tabs */
.sheettabs { height: 13px; display: flex; align-items: stretch; background: #9db9df; border-top: 1px solid #7b9bc9; color: #1f3a70; font: 9px/11px "Liberation Sans", sans-serif; }
.nav { display: flex; align-items: center; background: #cfe1f7; padding-right: 3px; }
.nav button { padding: 0 1px 0 0; }
.nav svg { width: 8px; height: 7px; fill: #1f3c78; }
.sheettabs a { position: relative; padding: 0 5px; background: #c8dcf5; }
.sheettabs a:not(.new)::after { content: ""; position: absolute; right: -2px; top: 0; height: 12px; border-right: 1px solid #7f9cc9; transform: skewX(-30deg); }
.sheettabs a.on { background: #fff; }
.sheettabs .new { clip-path: polygon(0 0, 100% 0, 70% 100%, 0 100%); width: 24px; }
.hbar { display: flex; width: 41%; min-width: 0; margin-left: auto; background: #7d9dcb; padding-right: 11px; }
.hbar .split { width: 4px; background: #eaf3fd; border: 1px solid #6f90c0; }
.hbar button { width: 12px; }
.lt::after { clip-path: polygon(100% 0, 100% 100%, 0 50%); }
.rt::after { clip-path: polygon(0 0, 100% 50%, 0 100%); }
.hbar .thumb { flex: 138; border: 1px solid #8296b5; background: linear-gradient(#9da6b3, #9da6b3) center / 5px 4px no-repeat, linear-gradient(#f5f8fb, #b9c6d8); }
.hbar .track { flex: 143; }

/* status bar */
.status { height: 13px; display: flex; align-items: center; padding-right: 3px; background: linear-gradient(#dbe9fb, #b0cdf3 60%, #c9defa); border-top: 1px solid #7da0d0; }
.mode { padding: 0 5px; border-right: 1px solid #a9c3e6; color: #1a3468; }
.views { display: flex; margin-left: auto; background: #c9ccd1; border: 1px solid #8f9bad; }
.views svg { width: 11px; height: 9px; }
.pct { width: 31px; text-align: center; color: #8ba3c8; font-size: 8px; }
.round { width: 9px; height: 9px; border-radius: 50%; border: 1px solid #58749f; background: #f0f5fc; justify-content: center; line-height: 7px; font-weight: 700; color: #2e4875; }
.status input { width: 65px; height: 9px; background: linear-gradient(#6f8db8, #6f8db8) center / 100% 1px no-repeat; }
.status input::-webkit-slider-thumb { appearance: none; width: 3px; height: 7px; background: #9bb3d6; }

/* taskbar */
.taskbar { height: 25px; display: flex; align-items: center; background: linear-gradient(#3c3d42, #5d5a5b 15%, #575352); color: #fff; flex: none; font-size: 8px; }
.start { margin: 0 6px 0 5px; }
.start svg { width: 24px; height: 24px; }
.grip { width: 6px; height: 18px; background: radial-gradient(circle at 1px 1px, #333 1px, transparent 1px) 0 0 / 3px 3px; }
.pin { margin-left: 12px; }
.pin svg { width: 22px; height: 20px; }
.tasks { display: flex; }
.pin + .tasks { margin-left: 7px; }
.tasks button { width: 48px; height: 24px; gap: 3px; padding-left: 3px; border: 1px solid #282828; box-shadow: inset 1px 1px #8b8888; background: linear-gradient(135deg, #858283, #5c5858 60%, #6b6766); }
.tasks svg { width: 20px; height: 20px; }
.tasks .now { background: linear-gradient(135deg, #b9b7b7, #8e8a8a 60%, #a09c9c); }
.last { margin-right: 5px; }
.talk { position: relative; margin: 0 7px 0 5px; }
.talk svg { width: 21px; height: 21px; }
.talk span { position: absolute; inset: 0; text-align: center; font: 700 6px/19px "Liberation Sans", sans-serif; color: #ffe812; }
.tray { display: flex; align-items: center; margin-left: auto; gap: 3px; }
.tray svg { width: 12px; height: 12px; }
.ime { width: 12px; height: 13px; font-size: 11px; line-height: 13px; text-align: center; background: #777; box-shadow: 0 0 0 1px #999; }
.clock { margin: 0 6px 0 10px; font-size: 8px; line-height: 11px; text-align: center; white-space: nowrap; }
.peek { width: 9px; height: 24px; background: linear-gradient(90deg, #8b8786, #4b4847); border: 1px solid #2e2c2c; }
```
